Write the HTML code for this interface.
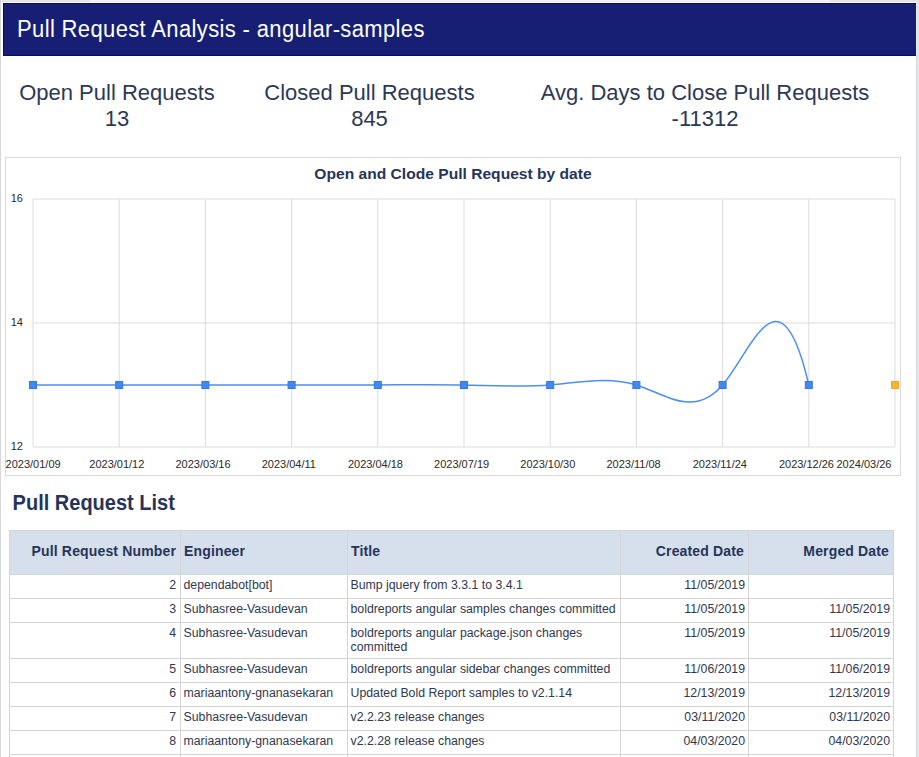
<!DOCTYPE html>
<html><head><meta charset="utf-8"><style>
html,body{margin:0;padding:0;background:#fff;width:919px;height:757px;overflow:hidden;position:relative}
body{font-family:"Liberation Sans",sans-serif}
.a{position:absolute;white-space:nowrap}
.kpi{font-size:22px;color:#2b3856;line-height:25px;text-align:center;transform:scaleY(1.03);transform-origin:0 20px}
.th{font-size:14px;font-weight:bold;color:#27345a;line-height:16px;letter-spacing:0.15px}
.td{font-size:12.3px;color:#30384f;line-height:14px}
.ax{font-size:11px;color:#2a2a2a;line-height:13px}
</style></head><body>
<div class="a" style="left:0;top:0;width:919px;height:2px;background:#e3e4e8"></div>
<div class="a" style="left:90px;top:0;width:740px;height:2px;background:#f0f1f4"></div>
<div class="a" style="left:0;top:0;width:1px;height:757px;background:#d5d6da"></div>
<div class="a" style="left:916px;top:0;width:3px;height:757px;background:#e3e4e8"></div>
<div class="a" style="left:916px;top:56px;width:1px;height:701px;background:#d8d9dd"></div>
<div class="a" style="left:916px;top:2px;width:1px;height:54px;background:#e9eaed"></div>
<div class="a" style="left:3px;top:3px;width:912px;height:51px;background:#161f74;border:1px solid #040d6f;border-right:0"></div>
<div class="a" style="left:17px;top:17px;font-size:22px;letter-spacing:0.36px;line-height:25px;color:#fff;transform:scaleY(1.065);transform-origin:0 20px">Pull Request Analysis - angular-samples</div>
<div class="a kpi" style="left:17px;width:200px;top:80px">Open Pull Requests</div><div class="a kpi" style="left:17px;width:200px;top:106px">13</div>
<div class="a kpi" style="left:219.5px;width:300px;top:80px">Closed Pull Requests</div><div class="a kpi" style="left:219.5px;width:300px;top:106px">845</div>
<div class="a kpi" style="left:505px;width:400px;top:80px">Avg. Days to Close Pull Requests</div><div class="a kpi" style="left:505px;width:400px;top:106px">-11312</div>
<div class="a" style="left:5px;top:157px;width:894px;height:317px;border:1px solid #d9d9d9"></div>
<div class="a" style="left:5px;width:896px;top:164.5px;text-align:center;font-size:15.6px;font-weight:bold;color:#27345a;line-height:18px;transform:scaleY(0.9);transform-origin:0 14px">Open and Clode Pull Request by date</div>
<svg width="919" height="757" style="position:absolute;left:0;top:0">
<g stroke="#dcdcdc" stroke-width="1"><line x1="33.0" y1="199.0" x2="33.0" y2="447.0"/><line x1="119.2" y1="199.0" x2="119.2" y2="447.0"/><line x1="205.4" y1="199.0" x2="205.4" y2="447.0"/><line x1="291.6" y1="199.0" x2="291.6" y2="447.0"/><line x1="377.8" y1="199.0" x2="377.8" y2="447.0"/><line x1="464.0" y1="199.0" x2="464.0" y2="447.0"/><line x1="550.2" y1="199.0" x2="550.2" y2="447.0"/><line x1="636.4" y1="199.0" x2="636.4" y2="447.0"/><line x1="722.6" y1="199.0" x2="722.6" y2="447.0"/><line x1="808.8" y1="199.0" x2="808.8" y2="447.0"/><line x1="895.0" y1="199.0" x2="895.0" y2="447.0"/><line x1="33.0" y1="447.0" x2="895.0" y2="447.0"/><line x1="33.0" y1="323.0" x2="895.0" y2="323.0"/><line x1="33.0" y1="199.0" x2="895.0" y2="199.0"/></g>
<path d="M33.00,385.00 C61.73,385.00 90.47,385.00 119.20,385.00 C147.93,385.00 176.67,385.01 205.40,385.00 C234.13,384.99 262.87,384.95 291.60,385.00 C320.33,385.05 349.07,385.17 377.80,385.00 C406.53,384.83 435.27,384.36 464.00,385.00 C492.73,385.64 521.47,387.40 550.20,385.00 C578.93,382.60 607.67,376.05 636.40,385.00 C665.13,393.95 693.87,418.41 722.60,385.00 C751.33,351.59 780.07,260.31 808.80,385.00" fill="none" stroke="#4a8ff5" stroke-width="1.5"/>
<rect x="29.5" y="381.5" width="7" height="7" fill="#4387ef" stroke="#2f78ea" stroke-width="1"/>
<rect x="115.7" y="381.5" width="7" height="7" fill="#4387ef" stroke="#2f78ea" stroke-width="1"/>
<rect x="201.9" y="381.5" width="7" height="7" fill="#4387ef" stroke="#2f78ea" stroke-width="1"/>
<rect x="288.1" y="381.5" width="7" height="7" fill="#4387ef" stroke="#2f78ea" stroke-width="1"/>
<rect x="374.3" y="381.5" width="7" height="7" fill="#4387ef" stroke="#2f78ea" stroke-width="1"/>
<rect x="460.5" y="381.5" width="7" height="7" fill="#4387ef" stroke="#2f78ea" stroke-width="1"/>
<rect x="546.7" y="381.5" width="7" height="7" fill="#4387ef" stroke="#2f78ea" stroke-width="1"/>
<rect x="632.9" y="381.5" width="7" height="7" fill="#4387ef" stroke="#2f78ea" stroke-width="1"/>
<rect x="719.1" y="381.5" width="7" height="7" fill="#4387ef" stroke="#2f78ea" stroke-width="1"/>
<rect x="805.3" y="381.5" width="7" height="7" fill="#4387ef" stroke="#2f78ea" stroke-width="1"/>
<rect x="891.5" y="381.5" width="7" height="7" fill="#f8b338" stroke="#f5a623" stroke-width="1"/>
</svg>
<div class="a ax" style="left:0;width:23px;top:192px;text-align:right">16</div>
<div class="a ax" style="left:0;width:23px;top:316px;text-align:right">14</div>
<div class="a ax" style="left:0;width:23px;top:440px;text-align:right">12</div>
<div class="a ax" style="left:5.6px;top:458px">2023/01/09</div>
<div class="a ax" style="left:89.30px;top:458px">2023/01/12</div>
<div class="a ax" style="left:175.50px;top:458px">2023/03/16</div>
<div class="a ax" style="left:261.70px;top:458px">2023/04/11</div>
<div class="a ax" style="left:347.90px;top:458px">2023/04/18</div>
<div class="a ax" style="left:434.10px;top:458px">2023/07/19</div>
<div class="a ax" style="left:520.30px;top:458px">2023/10/30</div>
<div class="a ax" style="left:606.50px;top:458px">2023/11/08</div>
<div class="a ax" style="left:692.70px;top:458px">2023/11/24</div>
<div class="a ax" style="left:778.90px;top:458px">2023/12/26</div>
<div class="a ax" style="left:821.5px;width:70px;top:458px;text-align:right">2024/03/26</div>
<div class="a" style="left:12.6px;top:492px;font-size:20px;font-weight:bold;color:#27345a;line-height:23px;transform:scaleY(1.07);transform-origin:0 18px">Pull Request List</div>
<div class="a" style="left:9px;top:530px;width:884px;height:44px;background:#d6dfec"></div>
<div class="a" style="left:9px;top:530px;width:885px;height:1px;background:#d4d4d4"></div>
<div class="a" style="left:9px;top:574px;width:885px;height:1px;background:#d4d4d4"></div>
<div class="a" style="left:9px;top:598px;width:885px;height:1px;background:#d4d4d4"></div>
<div class="a" style="left:9px;top:622px;width:885px;height:1px;background:#d4d4d4"></div>
<div class="a" style="left:9px;top:658px;width:885px;height:1px;background:#d4d4d4"></div>
<div class="a" style="left:9px;top:682px;width:885px;height:1px;background:#d4d4d4"></div>
<div class="a" style="left:9px;top:706px;width:885px;height:1px;background:#d4d4d4"></div>
<div class="a" style="left:9px;top:730px;width:885px;height:1px;background:#d4d4d4"></div>
<div class="a" style="left:9px;top:754px;width:885px;height:1px;background:#d4d4d4"></div>
<div class="a" style="left:9px;top:530px;width:1px;height:240px;background:#d4d4d4"></div>
<div class="a" style="left:180px;top:530px;width:1px;height:240px;background:#d4d4d4"></div>
<div class="a" style="left:347px;top:530px;width:1px;height:240px;background:#d4d4d4"></div>
<div class="a" style="left:620px;top:530px;width:1px;height:240px;background:#d4d4d4"></div>
<div class="a" style="left:748px;top:530px;width:1px;height:240px;background:#d4d4d4"></div>
<div class="a" style="left:893px;top:530px;width:1px;height:240px;background:#d4d4d4"></div>
<div class="a th" style="left:9px;width:167px;top:543px;text-align:right">Pull Request Number</div>
<div class="a th" style="left:184px;width:163px;top:543px">Engineer</div>
<div class="a th" style="left:351px;width:269px;top:543px">Title</div>
<div class="a th" style="left:620px;width:124px;top:543px;text-align:right">Created Date</div>
<div class="a th" style="left:748px;width:141px;top:543px;text-align:right">Merged Date</div>
<div class="a td" style="left:9px;width:167px;top:578px;text-align:right">2</div>
<div class="a td" style="left:183.5px;width:163px;top:578px">dependabot[bot]</div>
<div class="a td" style="left:350.5px;width:269px;top:578px">Bump jquery from 3.3.1 to 3.4.1</div>
<div class="a td" style="left:620px;width:125px;top:578px;text-align:right">11/05/2019</div>
<div class="a td" style="left:9px;width:167px;top:602px;text-align:right">3</div>
<div class="a td" style="left:183.5px;width:163px;top:602px">Subhasree-Vasudevan</div>
<div class="a td" style="left:350.5px;width:269px;top:602px">boldreports angular samples changes committed</div>
<div class="a td" style="left:620px;width:125px;top:602px;text-align:right">11/05/2019</div>
<div class="a td" style="left:748px;width:142px;top:602px;text-align:right">11/05/2019</div>
<div class="a td" style="left:9px;width:167px;top:626px;text-align:right">4</div>
<div class="a td" style="left:183.5px;width:163px;top:626px">Subhasree-Vasudevan</div>
<div class="a td" style="left:350.5px;width:269px;top:626px">boldreports angular package.json changes<br>committed</div>
<div class="a td" style="left:620px;width:125px;top:626px;text-align:right">11/05/2019</div>
<div class="a td" style="left:748px;width:142px;top:626px;text-align:right">11/05/2019</div>
<div class="a td" style="left:9px;width:167px;top:662px;text-align:right">5</div>
<div class="a td" style="left:183.5px;width:163px;top:662px">Subhasree-Vasudevan</div>
<div class="a td" style="left:350.5px;width:269px;top:662px">boldreports angular sidebar changes committed</div>
<div class="a td" style="left:620px;width:125px;top:662px;text-align:right">11/06/2019</div>
<div class="a td" style="left:748px;width:142px;top:662px;text-align:right">11/06/2019</div>
<div class="a td" style="left:9px;width:167px;top:686px;text-align:right">6</div>
<div class="a td" style="left:183.5px;width:163px;top:686px">mariaantony-gnanasekaran</div>
<div class="a td" style="left:350.5px;width:269px;top:686px">Updated Bold Report samples to v2.1.14</div>
<div class="a td" style="left:620px;width:125px;top:686px;text-align:right">12/13/2019</div>
<div class="a td" style="left:748px;width:142px;top:686px;text-align:right">12/13/2019</div>
<div class="a td" style="left:9px;width:167px;top:710px;text-align:right">7</div>
<div class="a td" style="left:183.5px;width:163px;top:710px">Subhasree-Vasudevan</div>
<div class="a td" style="left:350.5px;width:269px;top:710px">v2.2.23 release changes</div>
<div class="a td" style="left:620px;width:125px;top:710px;text-align:right">03/11/2020</div>
<div class="a td" style="left:748px;width:142px;top:710px;text-align:right">03/11/2020</div>
<div class="a td" style="left:9px;width:167px;top:734px;text-align:right">8</div>
<div class="a td" style="left:183.5px;width:163px;top:734px">mariaantony-gnanasekaran</div>
<div class="a td" style="left:350.5px;width:269px;top:734px">v2.2.28 release changes</div>
<div class="a td" style="left:620px;width:125px;top:734px;text-align:right">04/03/2020</div>
<div class="a td" style="left:748px;width:142px;top:734px;text-align:right">04/03/2020</div>
</body></html>
